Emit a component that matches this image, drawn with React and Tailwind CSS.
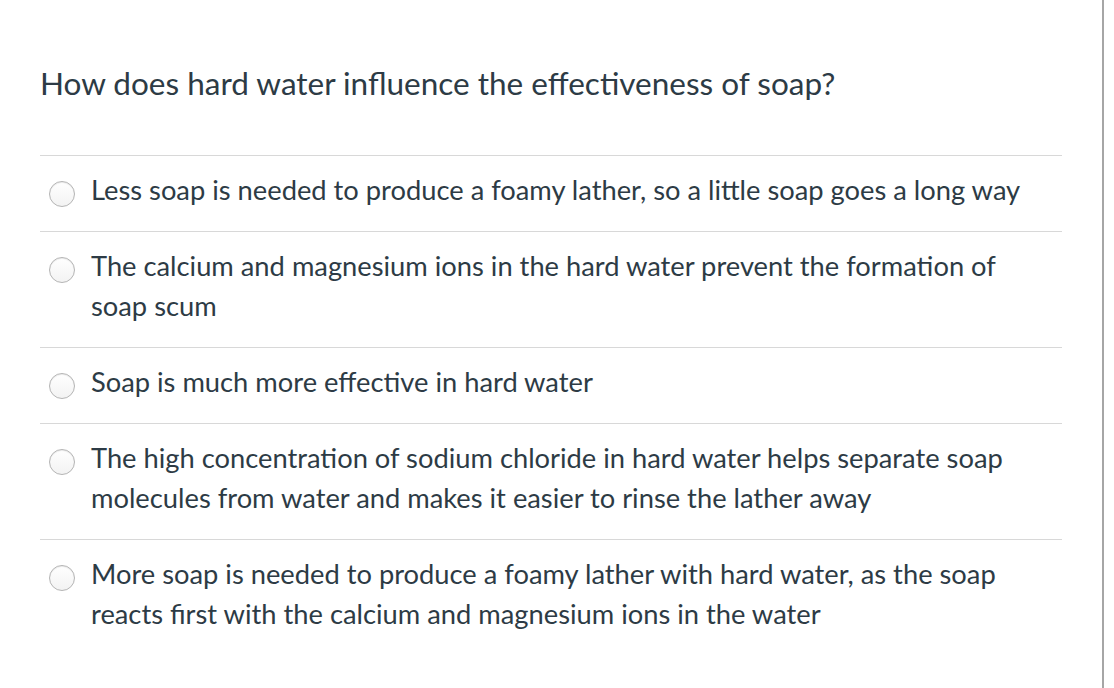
import React from 'react';

const answers = [
  'Less soap is needed to produce a foamy lather, so a little soap goes a long way',
  'The calcium and magnesium ions in the hard water prevent the formation of soap scum',
  'Soap is much more effective in hard water',
  'The high concentration of sodium chloride in hard water helps separate soap molecules from water and makes it easier to rinse the lather away',
  'More soap is needed to produce a foamy lather with hard water, as the soap reacts first with the calcium and magnesium ions in the water',
];

const Radio = () => (
  <span className="mt-[11px] block h-[26px] w-[26px] shrink-0 rounded-full border border-[#b4b4b4] bg-gradient-to-b from-white to-[#f3f3f3] shadow-[inset_0_1px_1px_rgba(0,0,0,0.08)]" />
);

export default function App() {
  return (
    <div className="h-[688px] w-[1104px] border-r-2 border-[#a6a6a6] bg-white" style={{ fontFamily: 'Lato, "Open Sans", sans-serif' }}>
      <div className="px-[40px] pt-[63px]">
        <h1 className="text-[31.5px] leading-[40px] text-[#2d3b45]">
          How does hard water influence the effectiveness of soap?
        </h1>

        <div className="mt-[52px]">
          {answers.map((text) => (
            <div key={text} className="flex gap-[16px] border-t border-[#d8d8d8] pt-[14px] pb-[21px] pl-[9px] pr-[8px]">
              <Radio />
              <p className="text-[27.3px] leading-[40px] text-[#2d3b45]">{text}</p>
            </div>
          ))}
        </div>
      </div>
    </div>
  );
}
